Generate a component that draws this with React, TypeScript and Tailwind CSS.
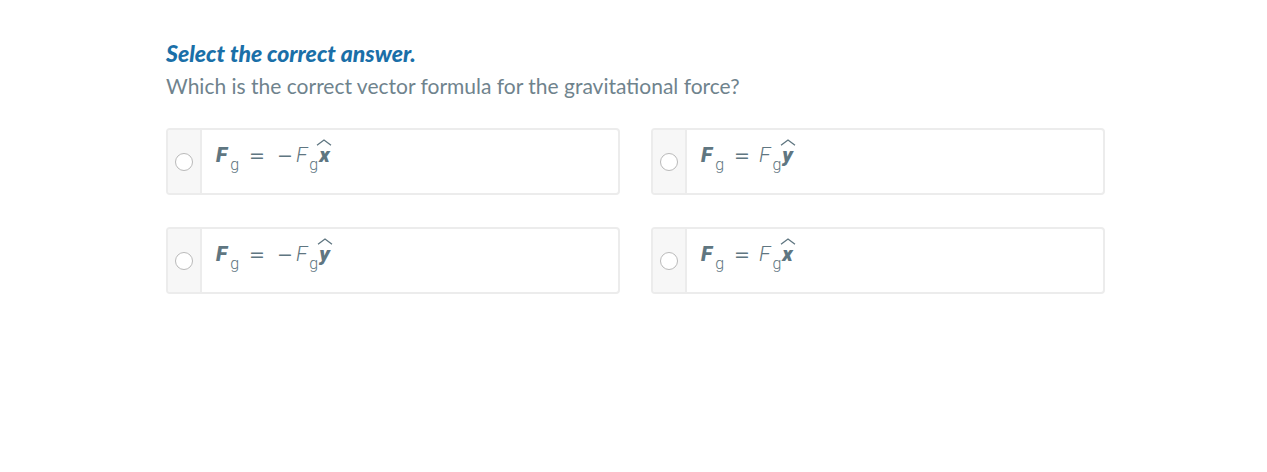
import React from 'react';

type Option = {
  minus: boolean;
  unit: 'x' | 'y';
};

const options: Option[] = [
  { minus: true, unit: 'x' },
  { minus: false, unit: 'y' },
  { minus: true, unit: 'y' },
  { minus: false, unit: 'x' },
];

function Hat() {
  return (
    <svg
      className="absolute left-1/2 top-[-6px] -translate-x-1/2"
      width="16"
      height="7"
      viewBox="0 0 16 7"
      fill="none"
    >
      <path d="M1 6.3 L8 1 L15 6.3" stroke="#5f7681" strokeWidth="1.3" />
    </svg>
  );
}

function Formula({ minus, unit }: Option) {
  return (
    <div className="flex items-baseline text-[21px] leading-none text-[#5f7681] [font-family:Roboto,sans-serif]">
      <span className="font-black italic">F</span>
      <span className="relative top-[8px] ml-[3px] text-[16px] font-light">g</span>
      <span className="ml-[10px] text-[19px] [font-family:'DejaVu_Sans',sans-serif]">=</span>
      {minus && (
        <span className="ml-[12px] text-[19px] [font-family:'DejaVu_Sans',sans-serif]">−</span>
      )}
      <span className={`${minus ? 'ml-[3px]' : 'ml-[9px]'} font-light italic`}>F</span>
      <span className="relative top-[8px] ml-[2px] text-[16px] font-light">g</span>
      <span className="relative ml-[1px] font-black italic">
        {unit}
        <Hat />
      </span>
    </div>
  );
}

function Card({ opt }: { opt: Option }) {
  return (
    <div className="flex h-[67px] overflow-hidden rounded-[4px] border-2 border-[#ececec] bg-white">
      <div className="flex w-[34px] shrink-0 items-center justify-center border-r-2 border-[#ececec] bg-[#f7f7f7]">
        <span className="block h-[18px] w-[18px] rounded-full border border-[#b9b9b9] bg-white" />
      </div>
      <div className="flex items-start pl-[14px] pt-[15px]">
        <Formula {...opt} />
      </div>
    </div>
  );
}

export default function App() {
  return (
    <div className="min-h-[472px] w-full bg-white [font-family:'Lato',sans-serif]">
      <div className="ml-[166px] w-[939px] pt-[38px]">
        <h1 className="text-[23px] font-black italic leading-[30px] text-[#1a6fa8]">
          Select the correct answer.
        </h1>
        <p className="mt-[4px] text-[21px] leading-[28px] text-[#6f838d]">
          Which is the correct vector formula for the gravitational force?
        </p>
        <div className="mt-[28px] grid grid-cols-2 gap-x-[31px] gap-y-[32px]">
          {options.map((o, i) => (
            <Card key={i} opt={o} />
          ))}
        </div>
      </div>
    </div>
  );
}
